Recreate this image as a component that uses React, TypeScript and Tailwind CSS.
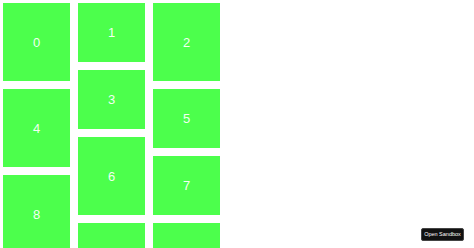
import React from 'react'

const columns: number[][] = [
  [0, 4, 8],
  [1, 3, 6, 9],
  [2, 5, 7, 10]
]

function Tile({ n }: { n: number }) {
  const heightClass = n % 2 === 0 ? 'h-[78px]' : 'h-[59px]'
  return (
    <div className={`${heightClass} w-[67px] shrink-0 bg-[#4cff4c] flex items-center justify-center`}>
      <span className="text-[13px] text-white/95 leading-none">{n}</span>
    </div>
  )
}

export default function App() {
  return (
    <div
      className="relative w-[474px] h-[248px] overflow-hidden bg-white"
      style={{ fontFamily: '"Liberation Sans", Arial, sans-serif' }}
    >
      <div className="flex gap-[8px] pl-[3px] pt-[3px]">
        {columns.map((col, i) => (
          <div key={i} className="flex flex-col gap-[8px]">
            {col.map((n) => (
              <Tile key={n} n={n} />
            ))}
          </div>
        ))}
      </div>

      <button className="absolute right-[10px] bottom-[7px] h-[13px] w-[43px] flex items-center justify-center bg-[#111] border border-[#444] rounded-[2px] text-white text-[5.5px] leading-none whitespace-nowrap">
        Open Sandbox
      </button>
    </div>
  )
}
